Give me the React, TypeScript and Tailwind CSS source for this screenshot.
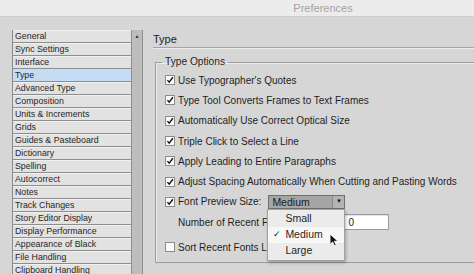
import React from "react";

const sections = [
  "General",
  "Sync Settings",
  "Interface",
  "Type",
  "Advanced Type",
  "Composition",
  "Units & Increments",
  "Grids",
  "Guides & Pasteboard",
  "Dictionary",
  "Spelling",
  "Autocorrect",
  "Notes",
  "Track Changes",
  "Story Editor Display",
  "Display Performance",
  "Appearance of Black",
  "File Handling",
  "Clipboard Handling",
];

const options = [
  "Use Typographer's Quotes",
  "Type Tool Converts Frames to Text Frames",
  "Automatically Use Correct Optical Size",
  "Triple Click to Select a Line",
  "Apply Leading to Entire Paragraphs",
  "Adjust Spacing Automatically When Cutting and Pasting Words",
];

function Checkbox({ checked }: { checked: boolean }) {
  return (
    <span className="flex h-[10px] w-[10px] shrink-0 items-center justify-center border border-[#8c8c8c] bg-[#fafafa]">
      {checked && (
        <svg viewBox="0 0 10 10" className="h-[10px] w-[10px]">
          <path d="M1.8 5.2 L4 7.8 L8.6 1.6" fill="none" stroke="#111" strokeWidth="1.7" />
        </svg>
      )}
    </span>
  );
}

function Cursor() {
  return (
    <svg viewBox="0 0 10 14" className="absolute left-[61px] top-[23px] h-[14px] w-[10px]">
      <path d="M1 1 L1 11.5 L3.6 9 L5.6 13 L7.3 12.2 L5.4 8.3 L9 8.3 Z" fill="#111" stroke="#fff" strokeWidth="0.9" />
    </svg>
  );
}

export default function App() {
  return (
    <div className="flex h-[274px] w-[474px] flex-col overflow-hidden bg-[#d6d6d6] font-['Liberation_Sans',Arial,sans-serif]">
      <div className="flex h-[17px] shrink-0 items-center justify-center border-b border-[#cdcdcd] bg-[#ececec] pl-[172px] text-[11px] text-[#a3a3a3]">
        Preferences
      </div>

      <div className="flex flex-1 pl-[12px] pt-[13px]">
        <div className="flex">
          <div className="w-[119px] border-l border-[#8a8a8a]">
            {sections.map((s) => (
              <div
                key={s}
                className={
                  "h-[13px] border-b border-[#8e8e8e] pl-[2px] text-[8.8px] leading-[12px] text-[#262626] " +
                  (s === "Type" ? "bg-[#c6dcf5]" : "bg-[#e2e2e2] shadow-[inset_0_1px_0_#f0f0f0]")
                }
              >
                {s}
              </div>
            ))}
          </div>
          <div className="w-[12px] border-x border-[#8f8f8f] bg-[#bdbdbd]">
            <div className="flex h-[10px] items-end justify-center text-[5px] text-[#333]">▲</div>
          </div>
        </div>

        <div className="ml-[10px] flex flex-1 flex-col">
          <div className="h-[18px] border-b border-[#a6a6a6] pt-[2px] text-[11px] leading-[14px] text-[#1e1e1e] shadow-[0_1px_0_#ececec]">
            Type
          </div>

          <fieldset className="-mr-[20px] ml-[2px] mt-[8px] border border-[#9c9c9c] pb-[5px] pl-[9px] shadow-[inset_1px_1px_0_#ececec]">
            <legend className="-ml-[3px] px-[3px] text-[10.2px] leading-[12px] text-[#1e1e1e]">Type Options</legend>
            <div className="pt-[2px] text-[10px] text-[#1e1e1e]">
              {options.map((o) => (
                <div key={o} className="flex h-[20.3px] items-center gap-[3px] whitespace-nowrap">
                  <Checkbox checked />
                  <span>{o}</span>
                </div>
              ))}

              <div className="flex h-[20.3px] items-center whitespace-nowrap">
                <Checkbox checked />
                <span className="ml-[3px]">Font Preview Size:</span>
                <div className="relative ml-[7px]">
                  <div className="flex h-[14px] w-[77px] items-center border border-[#6f6f6f] bg-[#a6a6a6]">
                    <span className="flex-1 pl-[3px] text-[10.5px] leading-[12px] text-[#1a1a1a]">Medium</span>
                    <span className="flex h-full w-[12px] items-center justify-center border-l border-[#8a8a8a] bg-[#b4b4b4] text-[6px] text-[#111]">
                      ▼
                    </span>
                  </div>
                  <div className="absolute left-[-1px] top-[14px] z-10 w-[78px] border border-[#a2a2a2] bg-[#ebebeb] py-[1px] text-[10.5px] shadow-[1px_2px_3px_rgba(0,0,0,0.25)]">
                    <div className="flex h-[16px] items-center pl-[17px]">Small</div>
                    <div className="flex h-[16px] items-center bg-[#f7f7f7]">
                      <span className="w-[17px] pl-[5px] text-[9px]">✓</span>
                      <span>Medium</span>
                    </div>
                    <div className="flex h-[16px] items-center pl-[17px]">Large</div>
                    <Cursor />
                  </div>
                </div>
              </div>

              <div className="flex h-[20.3px] items-center whitespace-nowrap pl-[13px]">
                <span>Number of Recent Fonts to Display:</span>
                <span className="ml-[8px] flex h-[16px] w-[45px] items-center border border-[#9a9a9a] bg-white pl-[3px] shadow-[inset_0_1px_1px_rgba(0,0,0,0.12)]">
                  0
                </span>
              </div>

              <div className="mt-[5px] flex h-[20px] items-center gap-[3px] whitespace-nowrap">
                <Checkbox checked={false} />
                <span>Sort Recent Fonts List</span>
              </div>
            </div>
          </fieldset>
        </div>
      </div>
    </div>
  );
}
